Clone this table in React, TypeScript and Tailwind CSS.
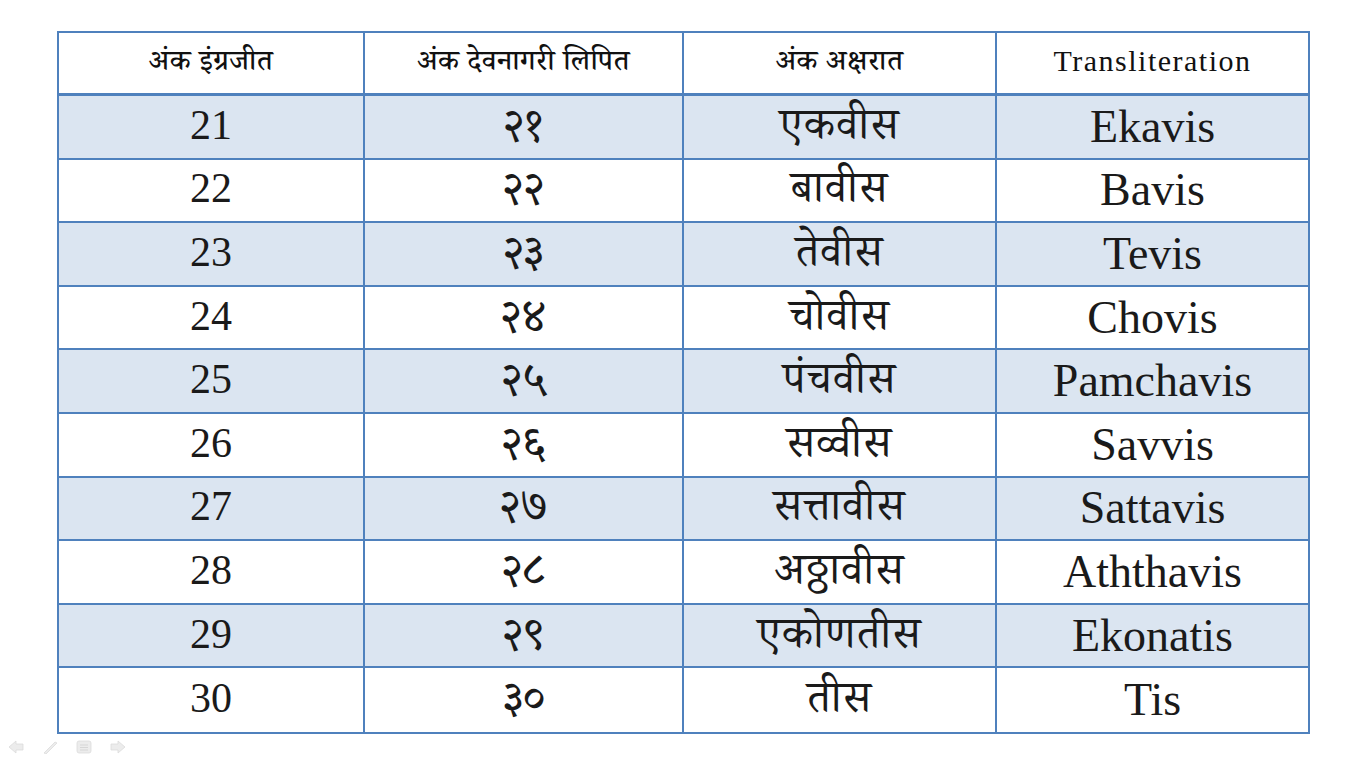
const rows = [
  ["21", "२१", "एकवीस", "Ekavis"],
  ["22", "२२", "बावीस", "Bavis"],
  ["23", "२३", "तेवीस", "Tevis"],
  ["24", "२४", "चोवीस", "Chovis"],
  ["25", "२५", "पंचवीस", "Pamchavis"],
  ["26", "२६", "सव्वीस", "Savvis"],
  ["27", "२७", "सत्तावीस", "Sattavis"],
  ["28", "२८", "अठ्ठावीस", "Aththavis"],
  ["29", "२९", "एकोणतीस", "Ekonatis"],
  ["30", "३०", "तीस", "Tis"],
]

const deva = "[font-family:'Noto_Serif_Devanagari','Noto_Sans_Devanagari','Lohit_Devanagari','Noto_Sans',serif]"

export default function App() {
  return (
    <div className="relative h-[767px] w-[1365px] overflow-hidden bg-white">
      <div className="pl-[57px] pt-[31px]">
        <div className="w-[1253px] border-2 border-[#4f81bd]">
          {/* Header */}
          <div className="grid h-[63px] grid-cols-[306px_319px_313px_311px] border-b-[3px] border-[#4f81bd] leading-none text-[#111]">
            <div className={`flex items-center justify-center border-r-2 border-[#4f81bd] pt-1 text-[29px] font-medium tracking-[0.5px] ${deva}`}>अंक इंग्रजीत</div>
            <div className={`flex items-center justify-center border-r-2 border-[#4f81bd] pt-1 text-[29px] font-medium tracking-[0.5px] ${deva}`}>अंक देवनागरी लिपित</div>
            <div className={`flex items-center justify-center border-r-2 border-[#4f81bd] pt-1 text-[29px] font-medium tracking-[0.5px] ${deva}`}>अंक अक्षरात</div>
            <div className="flex items-center justify-center pb-1 text-[30px] tracking-[1.5px] [font-family:'Liberation_Serif',serif]">Transliteration</div>
          </div>
          {rows.map((r, i) => (
            <div
              key={r[0]}
              className={`grid h-[63.6px] grid-cols-[306px_319px_313px_311px] leading-none text-[#1a1a1a] ${i % 2 === 0 ? "bg-[#dbe5f1]" : "bg-white"} ${i < rows.length - 1 ? "border-b-2 border-[#4f81bd]" : ""}`}
            >
              <div className="flex items-center justify-center border-r-2 border-[#4f81bd] pb-1 text-[42px] [font-family:'Liberation_Serif',serif]">{r[0]}</div>
              <div className={`flex items-center justify-center border-r-2 border-[#4f81bd] pt-3 text-[46px] ${deva}`}>{r[1]}</div>
              <div className={`flex items-center justify-center border-r-2 border-[#4f81bd] pt-3 text-[44px] tracking-[1px] ${deva}`}>{r[2]}</div>
              <div className="flex items-center justify-center text-[46px] [font-family:'Liberation_Serif',serif]">{r[3]}</div>
            </div>
          ))}
        </div>
      </div>
      {/* slide controls */}
      <div className="mt-[6px] flex items-center gap-[18px] pl-[8px]">
        <svg width="16" height="14" viewBox="0 0 16 14"><path d="M1 7 L8 1 L8 4 L15 4 L15 10 L8 10 L8 13 Z" fill="#ececec" stroke="#dcdcdc" strokeWidth="0.8" /></svg>
        <svg width="16" height="14" viewBox="0 0 16 14"><path d="M2 13 L13 2 L15 3 L4 14 Z" fill="#ececec" stroke="#dcdcdc" strokeWidth="0.8" /></svg>
        <svg width="16" height="14" viewBox="0 0 16 14"><rect x="1" y="1" width="14" height="12" rx="2" fill="#ececec" stroke="#dcdcdc" strokeWidth="0.8" /><path d="M4 5 H12 M4 7.5 H12 M4 10 H12" stroke="#d6d6d6" strokeWidth="1" /></svg>
        <svg width="16" height="14" viewBox="0 0 16 14"><path d="M15 7 L8 1 L8 4 L1 4 L1 10 L8 10 L8 13 Z" fill="#ececec" stroke="#dcdcdc" strokeWidth="0.8" /></svg>
      </div>
    </div>
  )
}
